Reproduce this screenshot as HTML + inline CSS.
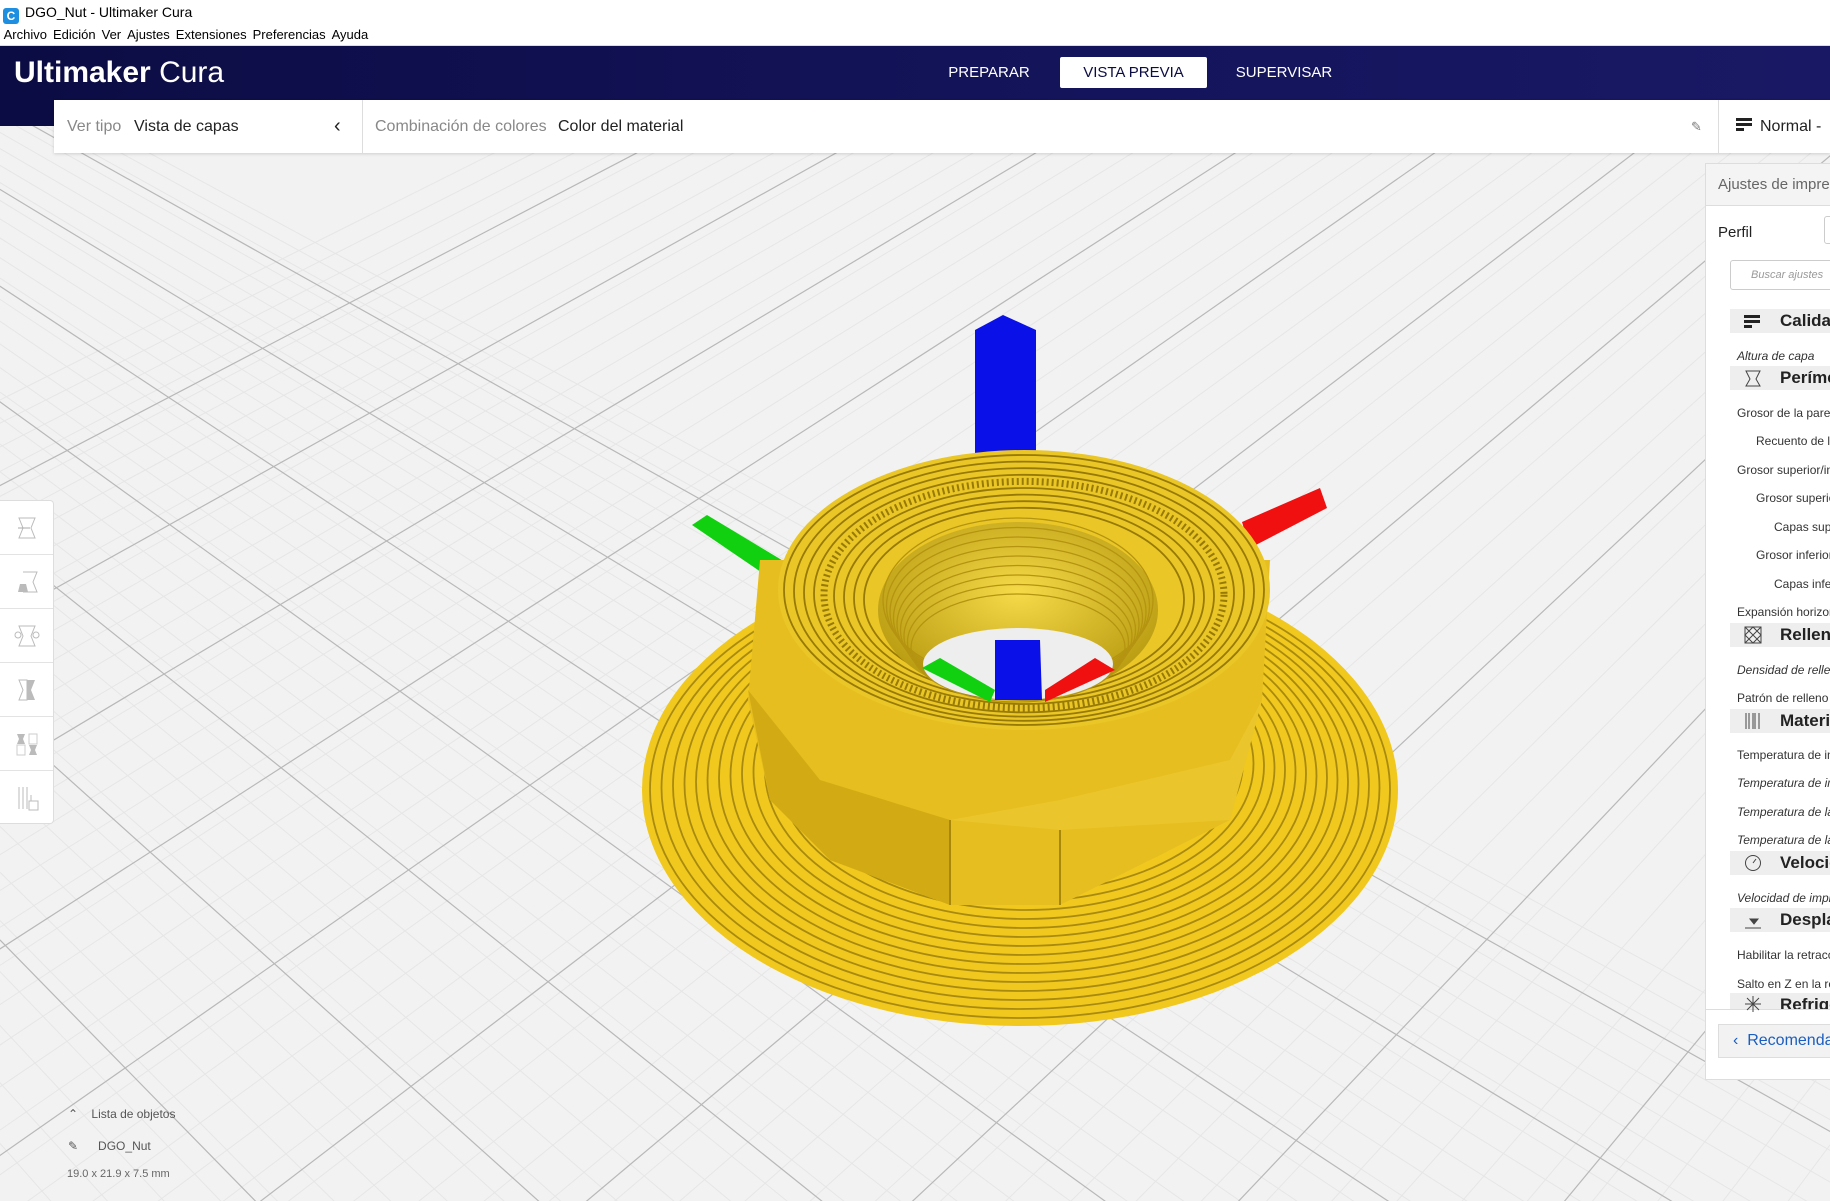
<!DOCTYPE html>
<html><head><meta charset="utf-8"><style>
*{margin:0;padding:0;box-sizing:border-box}
html,body{width:1830px;height:1201px;overflow:hidden}
body{background:#f2f2f2;font-family:"Liberation Sans","DejaVu Sans",sans-serif;position:relative}
.abs{position:absolute}
#title{left:0;top:0;width:1830px;height:24px;background:#fff;font-size:14px;line-height:24px;color:#000}
#menu{left:0;top:24px;width:1830px;height:22px;background:#fff;font-size:13px;line-height:22px;color:#000;border-bottom:1px solid #ddd}
#menu span{margin-right:6px}
#hdr{left:0;top:46px;width:1830px;height:54px;background:linear-gradient(90deg,#0c0c44,#14145c 60%,#181864)}
#lstrip{left:0;top:100px;width:54px;height:26px;background:#0c0c44}
.tab{top:57px;height:31px;line-height:31px;color:#fff;font-size:15px;text-align:center}
#tb{left:54px;top:100px;width:1776px;height:53px;background:#fff;box-shadow:0 1px 3px rgba(0,0,0,.15)}
#tb span{position:absolute;top:0;line-height:53px;font-size:16px}
.g{color:#888}.d{color:#222}
#rp{left:1705px;top:163px;width:125px;height:917px;background:#fff;border:1px solid #ddd;border-right:none;font-size:12px;color:#333;overflow:hidden}
#rp div{position:absolute;white-space:nowrap}
#rp .r{font-size:12px}
.cat{background:#eee;height:24px;font-weight:bold;font-size:17px;color:#222;line-height:24px}
#lt{left:0;top:500px;width:54px;height:324px;background:#fff;border:1px solid #ddd;border-left:none;border-radius:0 4px 4px 0}
#lt div{height:54px;border-bottom:1px solid #e3e3e3;display:flex;align-items:center;justify-content:center}
</style></head><body>
<svg class="abs" style="left:0;top:0" width="1830" height="1201" id="grid"></svg>

<div id="title" class="abs"><span style="display:inline-block;width:16px;height:16px;background:#1e8fe0;border-radius:3px;vertical-align:-3px;margin:0 6px 0 3px;color:#fff;font-size:12px;line-height:16px;text-align:center;font-weight:bold">C</span>DGO_Nut - Ultimaker Cura</div>
<div id="menu" class="abs">&nbsp;<span>Archivo</span><span>Edición</span><span>Ver</span><span>Ajustes</span><span>Extensiones</span><span>Preferencias</span><span>Ayuda</span></div>
<div id="hdr" class="abs"></div>
<div id="lstrip" class="abs"></div>
<div class="abs" style="left:14px;top:52px;color:#fff;font-size:30px;line-height:42px"><b>Ultimaker</b> <span style="font-weight:300">Cura</span></div>
<div class="abs tab" style="left:935px;width:108px">PREPARAR</div>
<div class="abs tab" style="left:1060px;width:147px;background:#fff;color:#0c0c44;border-radius:2px">VISTA PREVIA</div>
<div class="abs tab" style="left:1230px;width:108px">SUPERVISAR</div>
<div id="tb" class="abs">
<span class="g" style="left:13px">Ver tipo</span><span class="d" style="left:80px">Vista de capas</span>
<span class="d" style="left:280px;font-size:20px">‹</span>
<div style="position:absolute;left:308px;top:0;width:1px;height:53px;background:#ddd"></div>
<span class="g" style="left:321px">Combinación de colores</span><span class="d" style="left:504px">Color del material</span>
<span style="left:1637px;color:#777;font-size:13px">✎</span>
<div style="position:absolute;left:1664px;top:0;width:1px;height:53px;background:#ddd"></div>
<div style="position:absolute;left:1682px;top:18px;width:16px;height:3px;background:#222;box-shadow:0 5px 0 #222"></div><div style="position:absolute;left:1682px;top:28px;width:8px;height:3px;background:#222"></div>
<span class="d" style="left:1706px">Normal - 0.15mm</span>
</div>

<div id="lt" class="abs">
<div><svg width="26" height="26"><path d="M5 3h16l-4 10 4 10H5l4-10z" fill="none" stroke="#bbb"/><path d="M4 13h12" stroke="#aaa"/></svg></div>
<div><svg width="26" height="26"><path d="M9 3h14l-4 10 4 10H9" fill="none" stroke="#bbb"/><path d="M4 23l2-8h6l2 8z" fill="#bbb"/></svg></div>
<div><svg width="26" height="26"><path d="M5 3h16l-4 10 4 10H5l4-10z" fill="none" stroke="#bbb"/><circle cx="4" cy="12" r="3" fill="none" stroke="#bbb"/><circle cx="22" cy="12" r="3" fill="none" stroke="#bbb"/></svg></div>
<div><svg width="26" height="26"><path d="M5 3h8v20H5l4-10z" fill="none" stroke="#bbb"/><path d="M13 3h8l-4 10 4 10h-8z" fill="#bbb"/></svg></div>
<div><svg width="26" height="26"><path d="M3 3h8l-2 5 2 5H3l2-5z" fill="#bbb"/><path d="M15 3h8v10h-8z" fill="none" stroke="#ccc"/><path d="M3 14h8v10H3z" fill="none" stroke="#ccc"/><path d="M15 14h8l-2 5 2 5h-8l2-5z" fill="#bbb"/></svg></div>
<div style="border:none"><svg width="26" height="26"><path d="M5 2v22M9 2v22M13 2v22M17 10v14" stroke="#bbb"/><rect x="15" y="16" width="9" height="9" fill="#fff" stroke="#bbb"/></svg></div>
</div>

<div id="rp" class="abs">
<div style="left:0;top:0;width:125px;height:42px;background:#f4f4f4;border-bottom:1px solid #ddd;line-height:42px;padding-left:12px;font-size:15px;color:#666">Ajustes de impresión</div>
<div style="left:12px;top:60px;font-size:15px;color:#222">Perfil</div>
<div style="left:118px;top:52px;width:20px;height:28px;border:1px solid #ccc;border-radius:3px"></div>
<div style="left:24px;top:96px;width:110px;height:30px;border:1px solid #ccc;border-radius:3px;font-style:italic;color:#999;font-size:11px;line-height:28px;padding-left:20px">Buscar ajustes</div>
<div class="cat" style="left:24px;top:145px;width:110px;padding-left:50px">Calidad</div>
<div class="r" style="left:31px;top:185px;font-style:italic">Altura de capa</div>
<div class="cat" style="left:24px;top:202px;width:110px;padding-left:50px">Perímetro</div>
<div class="r" style="left:31px;top:242px">Grosor de la pared</div>
<div class="r" style="left:50px;top:270px">Recuento de líneas</div>
<div class="r" style="left:31px;top:299px">Grosor superior/inferior</div>
<div class="r" style="left:50px;top:327px">Grosor superior</div>
<div class="r" style="left:68px;top:356px">Capas superiores</div>
<div class="r" style="left:50px;top:384px">Grosor inferior</div>
<div class="r" style="left:68px;top:413px">Capas inferiores</div>
<div class="r" style="left:31px;top:441px">Expansión horizontal</div>
<div class="cat" style="left:24px;top:459px;width:110px;padding-left:50px">Relleno</div>
<div class="r" style="left:31px;top:499px;font-style:italic">Densidad de relleno</div>
<div class="r" style="left:31px;top:527px">Patrón de relleno</div>
<div class="cat" style="left:24px;top:545px;width:110px;padding-left:50px">Material</div>
<div class="r" style="left:31px;top:584px">Temperatura de impresión</div>
<div class="r" style="left:31px;top:612px;font-style:italic">Temperatura de impresión</div>
<div class="r" style="left:31px;top:641px;font-style:italic">Temperatura de la placa</div>
<div class="r" style="left:31px;top:669px;font-style:italic">Temperatura de la placa</div>
<div class="cat" style="left:24px;top:687px;width:110px;padding-left:50px">Velocidad</div>
<div class="r" style="left:31px;top:727px;font-style:italic">Velocidad de impresión</div>
<div class="cat" style="left:24px;top:744px;width:110px;padding-left:50px">Desplazamiento</div>
<div class="r" style="left:31px;top:784px">Habilitar la retracción</div>
<div class="r" style="left:31px;top:813px">Salto en Z en la retracción</div>
<div class="cat" style="left:24px;top:829px;width:110px;padding-left:50px">Refrigeración</div>
<div style="left:0;top:845px;width:125px;height:72px;background:#fff;border-top:1px solid #ddd"></div>
<div style="left:12px;top:860px;width:120px;height:34px;background:#f2f2f2;border:1px solid #ddd;color:#1a5ec0;font-size:16px;line-height:32px;padding-left:14px">‹&nbsp; Recomendado</div>
<div style="left:38px;top:151px;width:16px;height:3px;background:#222;box-shadow:0 5px 0 #222"></div><div style="left:38px;top:161px;width:8px;height:3px;background:#222"></div>
<svg style="position:absolute;left:38px;top:205px" width="18" height="18"><path d="M2 2h14l-4 8 4 7H2l4-7z" fill="none" stroke="#444"/></svg>
<svg style="position:absolute;left:38px;top:462px" width="18" height="18"><rect x="1" y="1" width="16" height="16" fill="none" stroke="#444"/><path d="M1 1l16 16M17 1L1 17M9 1l8 8-8 8-8-8z" stroke="#444" fill="none"/></svg>
<svg style="position:absolute;left:38px;top:548px" width="18" height="18"><path d="M2 1v16M5 1v16M9 1v16M11 1v16M15 1v16" stroke="#444"/></svg>
<svg style="position:absolute;left:38px;top:690px" width="18" height="18"><circle cx="9" cy="9" r="7.5" fill="none" stroke="#444"/><path d="M9 9l3-4" stroke="#444"/></svg>
<svg style="position:absolute;left:38px;top:747px" width="18" height="18"><path d="M1 17h16M6 8h8l-4 5z" stroke="#444" fill="#444"/></svg>
<svg style="position:absolute;left:38px;top:831px" width="18" height="18"><path d="M9 1v16M1 9h16M3 3l12 12M15 3L3 15" stroke="#444"/></svg>
</div>

<div class="abs" style="left:68px;top:1107px;font-size:12px;color:#555">⌃&nbsp;&nbsp;&nbsp; Lista de objetos</div>
<div class="abs" style="left:68px;top:1139px;font-size:12px;color:#555">✎&nbsp;&nbsp;&nbsp;&nbsp;&nbsp; DGO_Nut</div>
<div class="abs" style="left:67px;top:1168px;font-size:11px;color:#666">19.0 x 21.9 x 7.5 mm</div>

<svg class="abs" style="left:0;top:0" width="1830" height="1201">
<defs>
<radialGradient id="hole" cx="50%" cy="40%" r="60%"><stop offset="0" stop-color="#f6da48"/><stop offset="1" stop-color="#b89a10"/></radialGradient>
</defs>
<polygon points="975,330 1003,315 1036,330 1036,455 975,455" fill="#0a10e8"/>
<polygon points="692,525 707,515 790,565 780,585" fill="#10d010"/>
<polygon points="1242,522 1320,488 1327,508 1250,548" fill="#f01010"/>
<ellipse cx="1020" cy="790" rx="378" ry="236" fill="#f0c81e"/>
<g fill="none" stroke="#a88a10" stroke-width="1.8" id="rings"></g>
<polygon points="760,560 1270,560 1262,700 1230,820 1060,905 950,905 830,860 770,800 748,700" fill="#e6be20"/>
<polygon points="950,820 1060,830 1230,820 1262,700 1230,760 1060,800" fill="#eccb36" opacity=".6"/>
<polygon points="748,690 770,800 830,860 950,905 950,820 820,780" fill="#d2ab14"/>
<path d="M950,820 L950,905 M1060,830 L1060,905" stroke="#a8880c" stroke-width="2"/>
<ellipse cx="1024" cy="590" rx="246" ry="140" fill="#eac626"/>
<g fill="none" stroke="#977a06" stroke-width="1.8" id="top"></g>
<ellipse cx="1018" cy="610" rx="140" ry="88" fill="url(#hole)"/>
<g fill="none" stroke="#b49410" stroke-width="1.3" id="hl"></g>
<ellipse cx="1018" cy="664" rx="95" ry="36" fill="#eeeeee"/>
<polygon points="995,640 1040,640 1042,700 995,700" fill="#0a10e8"/>
<polygon points="922,668 940,658 995,690 990,702" fill="#10d010"/>
<polygon points="1045,690 1095,658 1115,670 1045,702" fill="#f01010"/>
</svg>
<script>
var ns="http://www.w3.org/2000/svg",g=document.getElementById('grid');
function L(x1,y1,x2,y2,c,w){var l=document.createElementNS(ns,'line');l.setAttribute('x1',x1);l.setAttribute('y1',y1);l.setAttribute('x2',x2);l.setAttribute('y2',y2);l.setAttribute('stroke',c);l.setAttribute('stroke-width',w);g.appendChild(l);}
var VA=[-1800,-900],VB=[3800,-1500];
function fam(V,xs,c,w){xs.forEach(function(x){L(V[0],V[1],x,1400,c,w);});}
var a=[],b=[],am=[],bm=[];
for(var i=-20;i<60;i++){am.push(-1200+i*62);bm.push(-600+i*70);}
fam(VA,am,'#e6e6e6',1);fam(VB,bm,'#e6e6e6',1);
for(var i=-4;i<12;i++){a.push(-1100+i*310);b.push(-350+i*350);}
fam(VA,a,'#b8b8b8',1.2);fam(VB,b,'#b8b8b8',1.2);
var r=document.getElementById('rings');
for(var k=0;k<20;k++){var e=document.createElementNS(ns,'ellipse');e.setAttribute('cx',1020+k*0.5);e.setAttribute('cy',790-k*2);e.setAttribute('rx',370-k*11);e.setAttribute('ry',228-k*7);r.appendChild(e);}
var t=document.getElementById('top');
for(var k=0;k<9;k++){var e=document.createElementNS(ns,'ellipse');e.setAttribute('cx',1024);e.setAttribute('cy',590+k*1.2);e.setAttribute('rx',240-k*10);e.setAttribute('ry',135-k*5.4);if(k==4){e.setAttribute('stroke-dasharray','2 3');e.setAttribute('stroke-width','7');}t.appendChild(e);}
var h=document.getElementById('hl');
for(var k=0;k<9;k++){var e=document.createElementNS(ns,'ellipse');e.setAttribute('cx',1018);e.setAttribute('cy',600+k*6);e.setAttribute('rx',135-k*3.5);e.setAttribute('ry',82-k*3.5);h.appendChild(e);}
</script>
</body></html>
